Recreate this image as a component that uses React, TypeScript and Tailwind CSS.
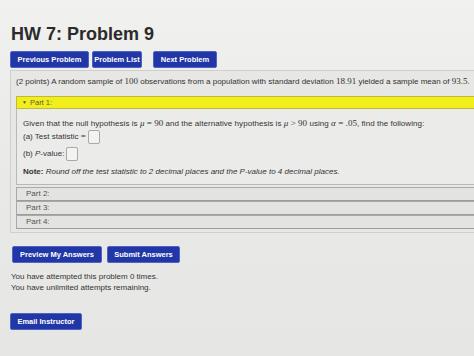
import React from "react";

const btn =
  "h-[17px] px-[4px] rounded-[2px] bg-[#2137a6] border border-[#4d63c6] text-white text-[7.5px] font-bold leading-none flex items-center justify-center whitespace-nowrap";

const serif = "font-['Liberation_Serif',serif] text-[9px]";

export default function App() {
  return (
    <div className="w-[474px] h-[356px] overflow-hidden bg-gradient-to-b from-[#f1f1ef] via-[#e9e9e7] to-[#e6e6e4] font-['Liberation_Sans',Arial,sans-serif] text-[#2a2a2a]">
      <div className="pl-[10px] pt-[24px]">
        <h1 className="text-[18px] font-bold leading-[21px] text-[#2b2b2b] pl-[1px]">HW 7: Problem 9</h1>
        <div className="flex gap-[3px] mt-[6px]">
          <button className={btn + " w-[79px]"}>Previous Problem</button>
          <button className={btn + " w-[50px]"}>Problem List</button>
          <button className={btn + " w-[64px] ml-[8px]"}>Next Problem</button>
        </div>
        <div className="mt-[2px] w-[480px] border border-[#cfcfcd] bg-[#e7e7e5] pl-[5px] pt-[5px] pb-[3px]">
          <p className="text-[8px] leading-[10px] text-[#333] whitespace-nowrap">
            (2 points) A random sample of <span className={serif}>100</span> observations from a population with standard deviation <span className={serif}>18.91</span> yielded a sample mean of <span className={serif}>93.5</span>.
          </p>
          <div className="mt-[9px] h-[13px] bg-[#f2ee1c] border border-[#bdbb3a] flex items-center pl-[5px] text-[7.5px] text-[#5a5a40]">
            <span className="text-[5px] mr-[3px]">▼</span>Part 1:
          </div>
          <div className="border border-t-0 border-[#b9b9b7] bg-[#ebebe9] pl-[6px] pt-[9px] pb-[7px] text-[8px] text-[#333]">
            <div className="leading-[10px] whitespace-nowrap tracking-[0.05px]">
              Given that the null hypothesis is <i className={serif}>μ</i> <span className={serif}>= 90</span> and the alternative hypothesis is <i className={serif}>μ</i> <span className={serif}>&gt; 90</span> using <i className={serif}>α</i> <span className={serif}>= .05</span>, find the following:
            </div>
            <div className="flex items-center mt-[1px] h-[14px]">
              <span>(a) Test statistic <span className={serif}>=</span></span>
              <span className="ml-[2px] w-[12px] h-[14px] border border-[#a9a9a9] rounded-[2px] bg-[#f3f3f1]" />
            </div>
            <div className="flex items-center mt-[3px] h-[14px]">
              <span>(b) <i>P</i>-value:</span>
              <span className="ml-[2px] w-[12px] h-[14px] border border-[#a9a9a9] rounded-[2px] bg-[#f3f3f1]" />
            </div>
            <div className="mt-[6px] leading-[10px] whitespace-nowrap">
              <b>Note:</b> <i>Round off the test statistic to 2 decimal places and the P-value to 4 decimal places.</i>
            </div>
          </div>
          <div className="mt-[2px] flex flex-col">
            {["Part 2:", "Part 3:", "Part 4:"].map((p) => (
              <div key={p} className="h-[14px] border border-[#a9a9a7] border-b-[#9c9c9a] bg-[#e3e3e1] flex items-center pl-[9px] text-[8px] text-[#555]">
                {p}
              </div>
            ))}
          </div>
        </div>
        <div className="flex gap-[5px] mt-[13px] pl-[2px]">
          <button className={btn + " w-[90px]"}>Preview My Answers</button>
          <button className={btn + " w-[73px]"}>Submit Answers</button>
        </div>
        <div className="mt-[8px] pl-[1px] text-[8px] leading-[11px] text-[#333]">
          <div>You have attempted this problem 0 times.</div>
          <div>You have unlimited attempts remaining.</div>
        </div>
        <button className={btn + " w-[72px] mt-[20px]"}>Email Instructor</button>
      </div>
    </div>
  );
}
